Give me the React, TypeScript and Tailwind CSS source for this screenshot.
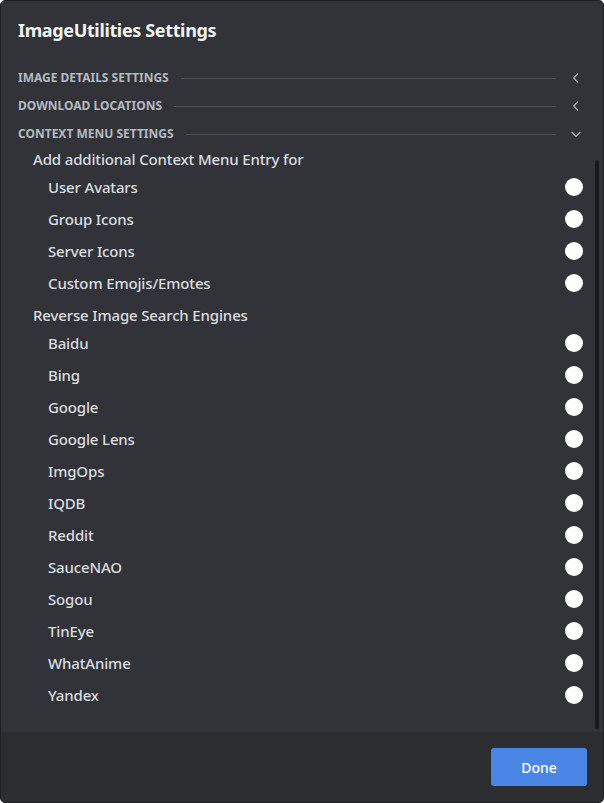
import React from "react";

const contextEntries = ["User Avatars", "Group Icons", "Server Icons", "Custom Emojis/Emotes"];
const engines = [
  "Baidu",
  "Bing",
  "Google",
  "Google Lens",
  "ImgOps",
  "IQDB",
  "Reddit",
  "SauceNAO",
  "Sogou",
  "TinEye",
  "WhatAnime",
  "Yandex",
];

const Chevron = ({ open }: { open: boolean }) => (
  <svg width="14" height="14" viewBox="0 0 24 24" fill="none" stroke="#b5bac1" strokeWidth="2" strokeLinecap="round" strokeLinejoin="round">
    {open ? <path d="M5 9l7 7 7-7" /> : <path d="M15 5l-7 7 7 7" />}
  </svg>
);

const SectionHeader = ({ title, open }: { title: string; open: boolean }) => (
  <div className="flex items-center h-[28px]">
    <span className="text-[12px] font-bold uppercase text-[#b5bac1] whitespace-nowrap">{title}</span>
    <div className="flex-1 h-px bg-[#4e5058] ml-[12px] mr-[13px]" />
    <div className="w-[14px] flex justify-center mr-[3px]">
      <Chevron open={open} />
    </div>
  </div>
);

const GroupTitle = ({ label, className = "" }: { label: string; className?: string }) => (
  <div className={`h-[24px] flex items-center ${className}`}>
    <span className="text-[15px] font-medium text-[#dbdee1] tracking-[-0.01em]">{label}</span>
  </div>
);

const Row = ({ label }: { label: string }) => (
  <div className="flex items-center justify-between h-[32px] pl-[15px] pr-[2px]">
    <span className="text-[15px] font-medium text-[#dbdee1] tracking-[-0.01em]">{label}</span>
    <div className="w-[18px] h-[18px] rounded-full bg-white" />
  </div>
);

export default function App() {
  return (
    <div
      className="w-[604px] h-[803px] bg-[#313338] border border-[#1e1f22] rounded-[5px] flex flex-col overflow-hidden"
      style={{ fontFamily: '"Noto Sans", "Liberation Sans", sans-serif' }}
    >
      <div className="px-[17px] pt-[17px] pb-[22px]">
        <h1 className="text-[18px] leading-[24px] font-bold text-[#f2f3f5] tracking-[-0.02em]">ImageUtilities Settings</h1>
      </div>
      <div className="pl-[17px] pr-[17px]">
        <SectionHeader title="Image Details Settings" open={false} />
        <SectionHeader title="Download Locations" open={false} />
        <SectionHeader title="Context Menu Settings" open={true} />
      </div>
      <div className="flex-1 flex min-h-0 -mt-[1px]">
        <div className="flex-1 pl-[32px] pr-[6px]">
          <GroupTitle label="Add additional Context Menu Entry for" />
          {contextEntries.map((e) => (
            <Row key={e} label={e} />
          ))}
          <GroupTitle label="Reverse Image Search Engines" className="mt-[4px]" />
          {engines.map((e) => (
            <Row key={e} label={e} />
          ))}
        </div>
        <div className="w-[12px] flex justify-center pt-[13px] pb-[3px]">
          <div className="w-[4px] h-[569px] rounded-full bg-[#1a1b1e]" />
        </div>
      </div>
      <div className="h-[70px] bg-[#2b2d31] flex items-center justify-end px-[16px]">
        <button className="w-[96px] h-[38px] rounded-[3px] bg-[#4a86e6] text-white text-[14px] font-medium">Done</button>
      </div>
    </div>
  );
}
